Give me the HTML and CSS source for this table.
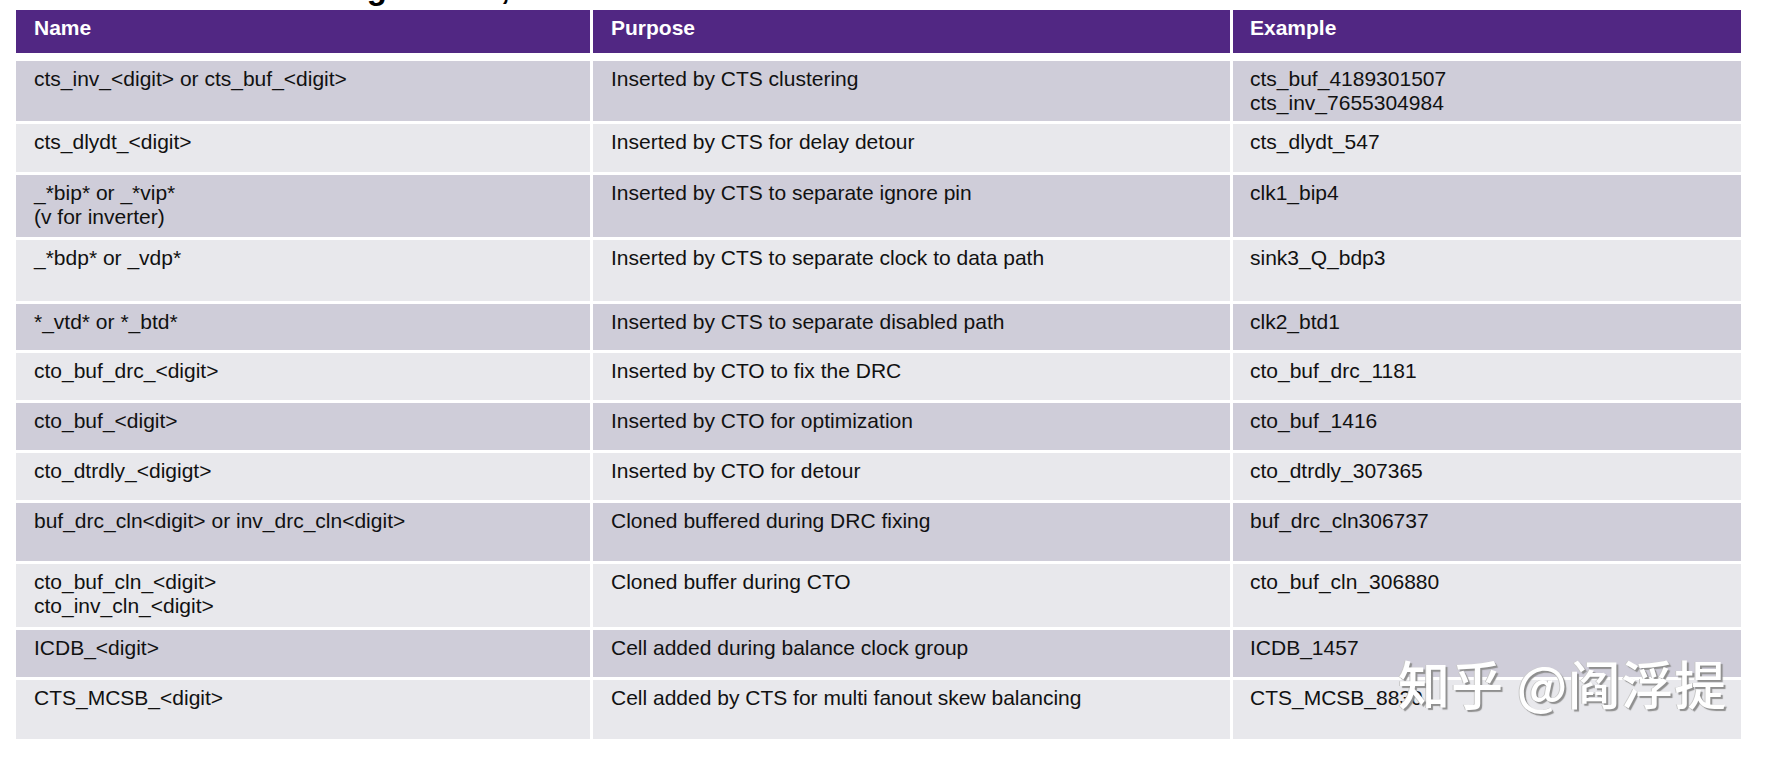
FILE: index.html
```html
<!DOCTYPE html>
<html lang="en">
<head>
<meta charset="utf-8">
<title>CTS cell naming</title>
<link rel="stylesheet" href="styles.css">
</head>
<body>
<div class="page">
  <div class="title-strip"><div class="title">Cell naming in CTS, CTO</div></div>
  <div class="table">
    <div class="row head">
      <div class="cell">Name</div>
      <div class="cell">Purpose</div>
      <div class="cell">Example</div>
    </div>
    <div class="row dark h60">
      <div class="cell">cts_inv_&lt;digit&gt; or cts_buf_&lt;digit&gt;</div>
      <div class="cell">Inserted by CTS clustering</div>
      <div class="cell">cts_buf_4189301507<br>cts_inv_7655304984</div>
    </div>
    <div class="row light h48">
      <div class="cell">cts_dlydt_&lt;digit&gt;</div>
      <div class="cell">Inserted by CTS for delay detour</div>
      <div class="cell">cts_dlydt_547</div>
    </div>
    <div class="row dark h62">
      <div class="cell">_*bip* or _*vip*<br>(v for inverter)</div>
      <div class="cell">Inserted by CTS to separate ignore pin</div>
      <div class="cell">clk1_bip4</div>
    </div>
    <div class="row light h61">
      <div class="cell">_*bdp* or _vdp*</div>
      <div class="cell">Inserted by CTS to separate clock to data path</div>
      <div class="cell">sink3_Q_bdp3</div>
    </div>
    <div class="row dark h46">
      <div class="cell">*_vtd* or *_btd*</div>
      <div class="cell">Inserted by CTS to separate disabled path</div>
      <div class="cell">clk2_btd1</div>
    </div>
    <div class="row light h47">
      <div class="cell">cto_buf_drc_&lt;digit&gt;</div>
      <div class="cell">Inserted by CTO to fix the DRC</div>
      <div class="cell">cto_buf_drc_1181</div>
    </div>
    <div class="row dark h47">
      <div class="cell">cto_buf_&lt;digit&gt;</div>
      <div class="cell">Inserted by CTO for optimization</div>
      <div class="cell">cto_buf_1416</div>
    </div>
    <div class="row light h47">
      <div class="cell">cto_dtrdly_&lt;digigt&gt;</div>
      <div class="cell">Inserted by CTO for detour</div>
      <div class="cell">cto_dtrdly_307365</div>
    </div>
    <div class="row dark h58">
      <div class="cell">buf_drc_cln&lt;digit&gt; or inv_drc_cln&lt;digit&gt;</div>
      <div class="cell">Cloned buffered during DRC fixing</div>
      <div class="cell">buf_drc_cln306737</div>
    </div>
    <div class="row light h63">
      <div class="cell">cto_buf_cln_&lt;digit&gt;<br>cto_inv_cln_&lt;digit&gt;</div>
      <div class="cell">Cloned buffer during CTO</div>
      <div class="cell">cto_buf_cln_306880</div>
    </div>
    <div class="row dark h47">
      <div class="cell">ICDB_&lt;digit&gt;</div>
      <div class="cell">Cell added during balance clock group</div>
      <div class="cell">ICDB_1457</div>
    </div>
    <div class="row light h59">
      <div class="cell">CTS_MCSB_&lt;digit&gt;</div>
      <div class="cell">Cell added by CTS for multi fanout skew balancing</div>
      <div class="cell">CTS_MCSB_8830</div>
    </div>
  </div>
  <div class="watermark">知乎 @阎浮提</div>
</div>
</body>
</html>
```

FILE: styles.css
```css
html, body {
  margin: 0;
  padding: 0;
  background: #ffffff;
}

.page {
  position: relative;
  width: 1773px;
  height: 761px;
  overflow: hidden;
  font-family: "Liberation Sans", Arial, sans-serif;
  color: #111111;
}

.title-strip {
  height: 10px;
  overflow: hidden;
  padding-left: 200px;
}

.title {
  margin-top: -31px;
  font-size: 33px;
  font-weight: bold;
  line-height: 38px;
  white-space: nowrap;
  color: #000000;
}

.table {
  margin-left: 16px;
  width: 1725px;
  display: flex;
  flex-direction: column;
  gap: 3px;
}

.row {
  display: grid;
  grid-template-columns: 574px 637px 508px;
  column-gap: 3px;
}

.cell {
  padding: 6px 10px 0 18px;
  font-size: 21px;
  line-height: 24px;
  white-space: nowrap;
}

.row .cell:nth-child(3) {
  padding-left: 17px;
}

.head {
  height: 43px;
  margin-bottom: 5px;
}

.head .cell {
  background: #512783;
  color: #ffffff;
  font-weight: bold;
}

.dark .cell {
  background: #cfcdd9;
}

.light .cell {
  background: #e8e8ec;
}

.h46 { height: 46px; }
.h47 { height: 47px; }
.h48 { height: 48px; }
.h58 { height: 58px; }
.h59 { height: 59px; }
.h60 { height: 60px; }
.h61 { height: 61px; }
.h62 { height: 62px; }
.h63 { height: 63px; }

.watermark {
  position: absolute;
  left: 1398px;
  top: 653px;
  font-family: "Noto Sans CJK SC", "Noto Sans", sans-serif;
  font-size: 52px;
  line-height: 60px;
  font-weight: 500;
  color: #ffffff;
  white-space: nowrap;
  letter-spacing: 1px;
  text-shadow: 2px 2px 1px #8f8f8f, -1px 0 0 #c8c8c8;
}
```
